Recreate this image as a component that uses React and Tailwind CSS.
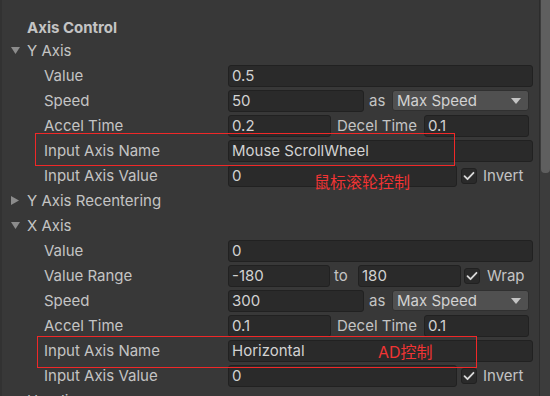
import React from "react";

const font = { fontFamily: "Inter, 'Noto Sans CJK SC', sans-serif" };

function Field({ w, children, className = "" }) {
  return (
    <div
      className={`h-[22px] rounded-[3px] bg-[#2a2a2a] border border-[#212121] flex items-center pl-[3px] text-[#d2d2d2] ${className}`}
      style={w ? { width: w } : undefined}
    >
      {children}
    </div>
  );
}

function Check() {
  return (
    <div className="w-[16px] h-[16px] rounded-[3px] bg-[#2a2a2a] border border-[#212121] flex items-center justify-center">
      <svg width="12" height="10" viewBox="0 0 12 10">
        <path d="M1.5 5.2 L4.5 8.2 L10.5 1.8" fill="none" stroke="#d8d8d8" strokeWidth="1.8" strokeLinecap="round" strokeLinejoin="round" />
      </svg>
    </div>
  );
}

function Dropdown() {
  return (
    <div className="w-[137px] h-[21px] rounded-[3px] bg-[#505050] border border-[#303030] flex items-center pl-[4px] pr-[7px] text-[#d2d2d2] justify-between">
      <span>Max Speed</span>
      <svg width="10" height="6" viewBox="0 0 10 6">
        <path d="M0 0 H10 L5 6 Z" fill="#c4c4c4" />
      </svg>
    </div>
  );
}

function Row({ label, children }) {
  return (
    <div className="h-[25px] shrink-0 flex items-center pl-[42px] pr-[6px]">
      <div className="w-[184px] shrink-0 text-[#c4c4c4]">{label}</div>
      <div className="flex-1 flex items-center">{children}</div>
    </div>
  );
}

function Fold({ open, label }) {
  return (
    <div className="h-[25px] shrink-0 flex items-center pl-[9px] text-[#c4c4c4]">
      <div className="w-[16px] flex items-center">
        {open ? (
          <svg width="9" height="7" viewBox="0 0 9 7">
            <path d="M0 0 H9 L4.5 7 Z" fill="#8c8c8c" />
          </svg>
        ) : (
          <svg width="8" height="9" viewBox="0 0 8 9">
            <path d="M0 0 L8 4.5 L0 9 Z" fill="#8c8c8c" />
          </svg>
        )}
      </div>
      <span>{label}</span>
    </div>
  );
}

export default function App() {
  return (
    <div
      className="w-[550px] h-[396px] bg-[#383838] overflow-hidden flex text-[15px] leading-none relative"
      style={font}
    >
      <div className="flex-1 flex flex-col pt-[13px] border-l-2 border-[#323232]">
        <div className="h-[25px] shrink-0 flex items-center pl-[25px] pt-[3px] font-bold text-[#c4c4c4]">
          Axis Control
        </div>
        <Fold open label="Y Axis" />
        <Row label="Value">
          <Field className="flex-1">0.5</Field>
        </Row>
        <Row label="Speed">
          <Field w={136}>50</Field>
          <span className="w-[28px] pl-[5px] text-[#c4c4c4]">as</span>
          <Dropdown />
        </Row>
        <Row label="Accel Time">
          <Field w={103}>0.2</Field>
          <span className="w-[93px] pl-[6px] text-[#c4c4c4]">Decel Time</span>
          <Field w={105}>0.1</Field>
        </Row>
        <Row label="Input Axis Name">
          <Field className="flex-1">Mouse ScrollWheel</Field>
        </Row>
        <Row label="Input Axis Value">
          <Field w={229}>0</Field>
          <div className="ml-[4px]">
            <Check />
          </div>
          <span className="ml-[6px] text-[#c4c4c4]">Invert</span>
        </Row>
        <Fold label="Y Axis Recentering" />
        <Fold open label="X Axis" />
        <Row label="Value">
          <Field className="flex-1">0</Field>
        </Row>
        <Row label="Value Range">
          <Field w={102}>-180</Field>
          <span className="w-[28px] pl-[4px] text-[#c4c4c4]">to</span>
          <Field w={103}>180</Field>
          <div className="ml-[3px]">
            <Check />
          </div>
          <span className="ml-[7px] text-[#c4c4c4]">Wrap</span>
        </Row>
        <Row label="Speed">
          <Field w={136}>300</Field>
          <span className="w-[28px] pl-[5px] text-[#c4c4c4]">as</span>
          <Dropdown />
        </Row>
        <Row label="Accel Time">
          <Field w={103}>0.1</Field>
          <span className="w-[93px] pl-[6px] text-[#c4c4c4]">Decel Time</span>
          <Field w={105}>0.1</Field>
        </Row>
        <Row label="Input Axis Name">
          <Field className="flex-1">Horizontal</Field>
        </Row>
        <Row label="Input Axis Value">
          <Field w={229}>0</Field>
          <div className="ml-[4px]">
            <Check />
          </div>
          <span className="ml-[6px] text-[#c4c4c4]">Invert</span>
        </Row>
        <Fold label="Heading" />
      </div>
      <div className="w-[11px] shrink-0 border-l border-[#2c2c2c] bg-[#3c3c3c]">
        <div className="ml-[1px] h-[173px] bg-[#5f5f5f] rounded-b-[4px]" />
      </div>

      <div className="absolute left-[35px] top-[133px] w-[420px] h-[33px] border border-[#f02828]" />
      <div className="absolute left-[314px] top-[174px] text-[16px] leading-none text-[#f03434]">
        鼠标滚轮控制
      </div>
      <div className="absolute left-[37px] top-[336px] w-[440px] h-[32px] border border-[#f02828]" />
      <div className="absolute left-[378px] top-[344px] text-[16px] leading-none text-[#f03434]">
        AD控制
      </div>
    </div>
  );
}
